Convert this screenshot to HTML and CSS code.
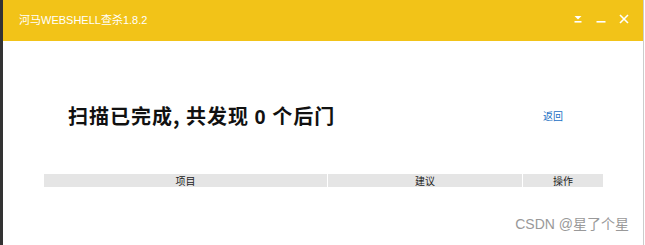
FILE: index.html
```html
<!DOCTYPE html>
<html lang="zh">
  <head>
    <meta charset="UTF-8" />
    <meta name="viewport" content="width=device-width, initial-scale=1.0" />
    <title>河马WEBSHELL查杀</title>
    <link rel="stylesheet" href="styles.css">
  </head>
  <body>
    <div class="win">
      <div class="bar">
        <span class="title">河马WEBSHELL查杀1.8.2</span>
        <div class="btns">
          <svg width="10" height="10" viewBox="0 0 10 10"><path d="M1.5 2h7L5 5.5z" fill="#fff"/><rect x="1.5" y="7" width="7" height="1.6" fill="#fff"/></svg>
          <svg width="10" height="10" viewBox="0 0 10 10"><rect x="0.5" y="7" width="9" height="1.6" fill="#fff"/></svg>
          <svg width="10" height="10" viewBox="0 0 10 10"><path d="M1 1L9 9M9 1L1 9" stroke="#fff" stroke-width="1.6"/></svg>
        </div>
      </div>
      <div class="main">
        <div class="head">
          <h1>扫描已完成, 共发现 <b>0</b> 个后门</h1>
          <a href="javascript:;" class="back">返回</a>
        </div>
        <div class="th">
          <div class="c1">项目</div>
          <div class="c2">建议</div>
          <div class="c3">操作</div>
        </div>
      </div>
      <div class="mark">CSDN @星了个星</div>
    </div>
  </body>
</html>
```

FILE: styles.css
```css
* {
  margin: 0;
  padding: 0;
  box-sizing: border-box;
}
body {
  width: 645px;
  height: 245px;
  overflow: hidden;
  background: #fff;
  font-family: "Noto Sans CJK SC", "Liberation Sans", sans-serif;
}
.win {
  position: relative;
  height: 245px;
  border-left: 3px solid #333;
  border-right: 1px solid #ccc;
  margin-right: 1px;
}
.bar {
  height: 41px;
  background: #f2c318;
  display: flex;
  align-items: center;
  justify-content: space-between;
  padding: 0 14px 0 16px;
}
.title {
  color: #fff;
  font-family: "Liberation Sans", "Noto Sans CJK SC", sans-serif;
  font-size: 11px;
  margin-top: -4px;
}
.btns {
  display: flex;
  gap: 13px;
  margin-top: -4px;
}
.main {
  padding: 0 38px 0 41px;
}
.head {
  display: flex;
  align-items: center;
  justify-content: space-between;
  height: 66px;
  margin-top: 41px;
  padding: 0 42px 0 24px;
}
h1 {
  font-size: 20px;
  font-weight: bold;
  color: #111;
  letter-spacing: 1px;
}
h1 b {
  font-family: "Liberation Sans", sans-serif;
}
.back {
  color: #1a6fc4;
  font-size: 10px;
  text-decoration: none;
}
.th {
  display: flex;
  margin-top: 26px;
  height: 13px;
  font-size: 10px;
  line-height: 13px;
  color: #222;
}
.th div {
  background: #e5e5e5;
  text-align: center;
}
.c1 {
  width: 283px;
}
.c2 {
  width: 195px;
  border-left: 1px solid #fff;
}
.c3 {
  width: 81px;
  border-left: 1px solid #fff;
}
.mark {
  position: absolute;
  right: 14px;
  bottom: 12px;
  color: #999;
  font-size: 14px;
  font-family: "Liberation Sans", "Noto Sans CJK SC", sans-serif;
}
```
